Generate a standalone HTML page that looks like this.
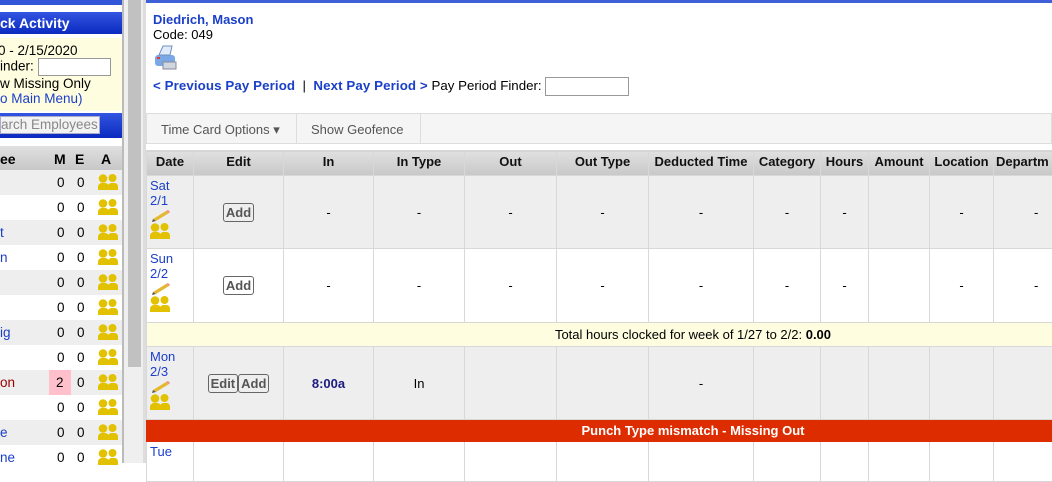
<!DOCTYPE html>
<html><head><meta charset="utf-8"><style>
*{box-sizing:border-box}
body{margin:0;width:1052px;height:463px;overflow:hidden;background:#fff;font-family:"Liberation Sans",Arial,sans-serif;font-size:13px;position:relative}
.abs{position:absolute}
a{color:#1a3fc8;text-decoration:none}
.hdr{background:linear-gradient(#3355e0,#0a2ac0);color:#fff;font-weight:bold;font-size:14px}
.lt{position:absolute;left:0;width:122px}
.lt .r{height:25px;position:relative;font-size:13.5px}
.lt .r span{position:absolute;top:5px}
.ico{display:inline-block;width:20px;height:16px;vertical-align:top}
table{border-collapse:collapse;position:absolute;left:146px;top:150px;width:1094px}
td,th{border:1px solid #d8d8d8;text-align:center;font-size:13px;padding:0}
th{background:linear-gradient(#e0e0e0,#c8c8c8);height:25px;font-weight:bold;color:#111;padding-bottom:3px}
.btn{display:inline-block;border:1px solid #666;border-radius:3px;padding:1px 2px;font-weight:bold;color:#555;font-size:13px;line-height:15px}
.dt{text-align:left;padding-left:3px;vertical-align:top;padding-top:2px;line-height:15px}
.pen{display:inline-block;width:20px;height:14px;vertical-align:top}
</style></head><body>
<svg width="0" height="0" style="position:absolute"><defs>
<symbol id="pp" viewBox="0 0 20 16"><circle cx="5" cy="4.5" r="4.3" fill="#e2c200"/><circle cx="14.5" cy="4" r="4" fill="#e2c200"/><path d="M0 16v-3a4 4 0 0 1 4-4h3a4 4 0 0 1 4 4v3z" fill="#e2c200"/><path d="M10 16v-3.5a3.5 3.5 0 0 1 3.5-3.5h3a3.5 3.5 0 0 1 3.5 3.5v3.5z" fill="#e2c200"/></symbol>
<symbol id="pn" viewBox="0 0 20 14"><path d="M3 11l13-8 3 2-13 8z" fill="#e4b830"/><path d="M16 3l2-1 2 2-1 1z" fill="#e88"/><path d="M3 11l3 2-4 1z" fill="#555"/></symbol>
</defs></svg>
<!-- left panel -->
<div class="abs" style="left:0;top:0;width:122px;height:5px;background:#3355d8"></div>
<div class="abs hdr" style="left:0;top:12px;width:122px;height:22px;padding:3px 0 0 0">ck Activity</div>
<div class="abs" style="left:0;top:38px;width:122px;height:73px;background:#fffde0;font-size:13.5px;line-height:15px;padding-top:5px">
<div style="margin-left:-2px">0 - 2/15/2020</div>
<div>inder: <span style="display:inline-block;width:73px;height:18px;border:1px solid #999;background:#fff;vertical-align:middle"></span></div>
<div>w Missing Only</div>
<div><a>o Main Menu)</a></div>
</div>
<div class="abs hdr" style="left:0;top:113px;width:122px;height:25px;padding:3px 0 0 0"><div style="background:#f3f3f3;color:#888;font-weight:normal;width:100px;height:18px;border:1px solid #aac;font-size:13.5px">arch Employees</div></div>
<div class="abs" style="left:0;top:146px;width:122px;height:24px;background:linear-gradient(#e0e0e0,#c8c8c8);font-weight:bold;font-size:14px">
<span class="abs" style="left:0;top:5px">ee</span><span class="abs" style="left:54px;top:5px">M</span><span class="abs" style="left:75px;top:5px">E</span><span class="abs" style="left:101px;top:5px">A</span></div>
<div class="lt" style="top:170px">
<div class="r" style="background:#eee"><span style="left:57px">0</span><span style="left:77px">0</span><span style="left:98px;top:4px"><svg class="ico"><use href="#pp"/></svg></span></div>
<div class="r"><span style="left:57px">0</span><span style="left:77px">0</span><span style="left:98px;top:4px"><svg class="ico"><use href="#pp"/></svg></span></div>
<div class="r" style="background:#eee"><span style="left:0;color:#1a3fc8">t</span><span style="left:57px">0</span><span style="left:77px">0</span><span style="left:98px;top:4px"><svg class="ico"><use href="#pp"/></svg></span></div>
<div class="r"><span style="left:0;color:#1a3fc8">n</span><span style="left:57px">0</span><span style="left:77px">0</span><span style="left:98px;top:4px"><svg class="ico"><use href="#pp"/></svg></span></div>
<div class="r" style="background:#eee"><span style="left:57px">0</span><span style="left:77px">0</span><span style="left:98px;top:4px"><svg class="ico"><use href="#pp"/></svg></span></div>
<div class="r"><span style="left:57px">0</span><span style="left:77px">0</span><span style="left:98px;top:4px"><svg class="ico"><use href="#pp"/></svg></span></div>
<div class="r" style="background:#eee"><span style="left:0;color:#1a3fc8">ig</span><span style="left:57px">0</span><span style="left:77px">0</span><span style="left:98px;top:4px"><svg class="ico"><use href="#pp"/></svg></span></div>
<div class="r"><span style="left:57px">0</span><span style="left:77px">0</span><span style="left:98px;top:4px"><svg class="ico"><use href="#pp"/></svg></span></div>
<div class="r" style="background:#eee"><span style="left:0;color:#900">on</span><span style="left:49px;top:0;width:22px;height:25px;background:#ffc0cb;padding:5px 0 0 7px">2</span><span style="left:77px">0</span><span style="left:98px;top:4px"><svg class="ico"><use href="#pp"/></svg></span></div>
<div class="r"><span style="left:57px">0</span><span style="left:77px">0</span><span style="left:98px;top:4px"><svg class="ico"><use href="#pp"/></svg></span></div>
<div class="r" style="background:#eee"><span style="left:0;color:#1a3fc8">e</span><span style="left:57px">0</span><span style="left:77px">0</span><span style="left:98px;top:4px"><svg class="ico"><use href="#pp"/></svg></span></div>
<div class="r"><span style="left:0;color:#1a3fc8">ne</span><span style="left:57px">0</span><span style="left:77px">0</span><span style="left:98px;top:4px"><svg class="ico"><use href="#pp"/></svg></span></div>
</div>
<div class="abs" style="left:122px;top:0;width:2px;height:463px;background:#bbb"></div>
<div class="abs" style="left:124px;top:0;width:19px;height:463px;background:#efefef"></div>
<div class="abs" style="left:128px;top:0;width:13px;height:367px;background:#c1c1c1"></div>
<div class="abs" style="left:143px;top:0;width:3px;height:463px;background:#ddd"></div>
<!-- main -->
<div class="abs" style="left:146px;top:0;width:906px;height:3px;background:#4060d8"></div>
<div class="abs" style="left:153px;top:12px;line-height:15px"><a style="font-weight:bold">Diedrich, Mason</a><br>Code: 049</div>
<svg class="abs" style="left:153px;top:43px" width="26" height="30"><rect x="2" y="12" width="20" height="11" rx="3" fill="#7aa8e6"/><path d="M6 12l4-9h9l-2 9z" fill="#e0ecfa" stroke="#7090c0"/><rect x="10" y="19" width="13" height="7" fill="#cfd6e0" stroke="#889"/><rect x="4" y="14" width="3" height="2" fill="#e33"/></svg>
<div class="abs" style="left:153px;top:77px;font-size:13.3px"><a style="font-weight:bold;letter-spacing:0.1px">&lt; Previous Pay Period</a> &nbsp;|&nbsp; <a style="font-weight:bold;letter-spacing:0.1px">Next Pay Period &gt;</a> Pay Period Finder: <span style="display:inline-block;width:84px;height:19px;border:1px solid #999;vertical-align:middle"></span></div>
<div class="abs" style="left:146px;top:113px;width:906px;height:31px;background:#f5f5f5;border:1px solid #ddd;color:#555;font-size:13px">
<span class="abs" style="left:14px;top:8px">Time Card Options ▾</span>
<span class="abs" style="left:149px;top:-1px;width:1px;height:31px;background:#ddd"></span>
<span class="abs" style="left:164px;top:8px">Show Geofence</span>
<span class="abs" style="left:273px;top:-1px;width:1px;height:31px;background:#ddd"></span>
</div>
<table>
<tr><th style="width:47px">Date</th><th style="width:90px">Edit</th><th style="width:90px">In</th><th style="width:91px">In Type</th><th style="width:92px">Out</th><th style="width:92px">Out Type</th><th style="width:105px">Deducted Time</th><th style="width:67px">Category</th><th style="width:48px">Hours</th><th style="width:61px">Amount</th><th style="width:64px">Location</th><th style="text-align:left;padding-left:2px">Departm</th></tr>
<tr style="background:#eee;height:73px"><td class="dt"><a>Sat<br>2/1</a><br><svg class="pen"><use href="#pn"/></svg><br><svg class="ico"><use href="#pp"/></svg></td><td><span class="btn">Add</span></td><td>-</td><td>-</td><td>-</td><td>-</td><td>-</td><td>-</td><td>-</td><td></td><td>-</td><td style="text-align:left;padding-left:40px">-</td></tr>
<tr style="height:74px"><td class="dt"><a>Sun<br>2/2</a><br><svg class="pen"><use href="#pn"/></svg><br><svg class="ico"><use href="#pp"/></svg></td><td><span class="btn">Add</span></td><td>-</td><td>-</td><td>-</td><td>-</td><td>-</td><td>-</td><td>-</td><td></td><td>-</td><td style="text-align:left;padding-left:40px">-</td></tr>
<tr style="height:24px;background:#fffde0"><td colspan="12">Total hours clocked for week of 1/27 to 2/2: <b>0.00</b></td></tr>
<tr style="background:#eee;height:73px"><td class="dt"><a>Mon<br>2/3</a><br><svg class="pen"><use href="#pn"/></svg><br><svg class="ico"><use href="#pp"/></svg></td><td><span class="btn">Edit</span><span class="btn">Add</span></td><td style="color:#1a1a80;font-weight:bold">8:00a</td><td>In</td><td></td><td></td><td>-</td><td></td><td></td><td></td><td></td><td></td></tr>
<tr style="height:22px;background:#dd2c00;color:#fff;font-weight:bold"><td colspan="12" style="border-color:#dd2c00">Punch Type mismatch - Missing Out</td></tr>
<tr style="height:40px"><td class="dt"><a>Tue</a></td><td></td><td></td><td></td><td></td><td></td><td></td><td></td><td></td><td></td><td></td><td></td></tr>
</table>
</body></html>
